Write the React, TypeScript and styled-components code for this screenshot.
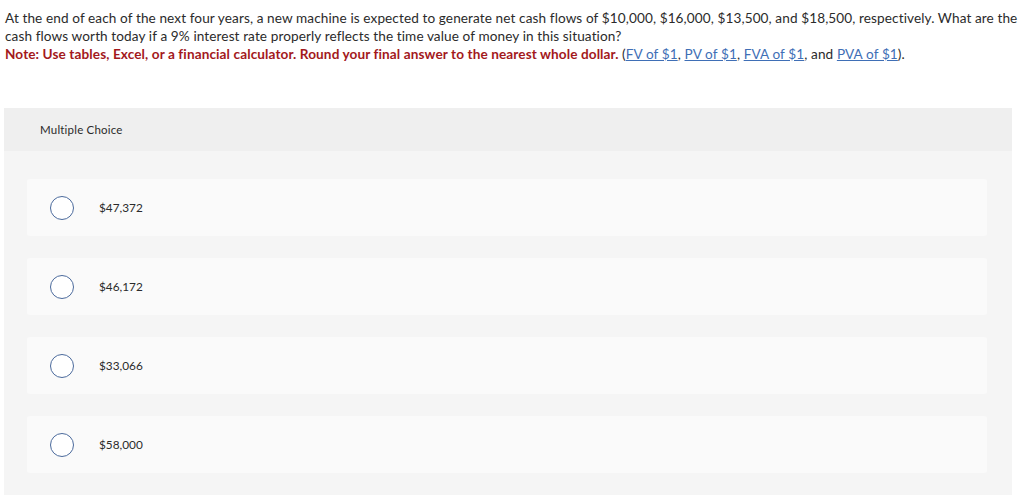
import React from 'react';
import styled, { createGlobalStyle } from 'styled-components';

const GlobalStyle = createGlobalStyle`
  body {
    margin: 0;
    background: #ffffff;
    font-family: 'Lato', 'Open Sans', sans-serif;
    color: #2b2b2b;
  }
`;

const Page = styled.div`
  padding: 9px 4px 0 4px;
`;

const Prompt = styled.p`
  margin: 0 0 0 1px;
  font-size: 13.6px;
  line-height: 18px;
  letter-spacing: 0.1px;
  color: #2b2b2b;
`;

const Note = styled.p`
  margin: 0 0 0 1px;
  font-size: 13.6px;
  line-height: 18px;
  letter-spacing: 0.1px;
  font-weight: 700;
  color: #a3191c;
`;

const Plain = styled.span`
  font-weight: 400;
  color: #2b2b2b;
`;

const RefLink = styled.a`
  font-weight: 400;
  color: #3f6fb6;
  text-decoration: underline;
`;

const Panel = styled.section`
  margin-top: 45px;
  margin-right: 8px;
  background: #f5f5f5;
  padding-bottom: 30px;
`;

const PanelHeader = styled.div`
  height: 43px;
  display: flex;
  align-items: center;
  padding-left: 36px;
  background: #efefef;
  font-size: 11.5px;
  letter-spacing: 0.2px;
  color: #2b2b2b;
`;

const Options = styled.div`
  display: flex;
  flex-direction: column;
  gap: 22px;
  padding: 28px 25px 0 23px;
`;

const OptionCard = styled.label`
  height: 57px;
  display: flex;
  align-items: center;
  gap: 25px;
  padding-left: 23px;
  background: #fafafa;
  border-radius: 3px;
  font-size: 11.8px;
  color: #2b2b2b;
`;

const Radio = styled.span`
  width: 22px;
  height: 22px;
  border-radius: 50%;
  border: 1px solid #4b6a9c;
  background: #ffffff;
  flex-shrink: 0;
`;

const choices = ['$47,372', '$46,172', '$33,066', '$58,000'];
const tables = ['FV of $1', 'PV of $1', 'FVA of $1', 'PVA of $1'];

export default function App(): React.ReactElement {
  return (
    <Page>
      <GlobalStyle />
      <Prompt>
        At the end of each of the next four years, a new machine is expected to generate net cash flows of $10,000, $16,000, $13,500, and $18,500, respectively. What are the cash flows worth today if a 9% interest rate properly reflects the time value of money in this situation?
      </Prompt>
      <Note>
        Note: Use tables, Excel, or a financial calculator. Round your final answer to the nearest whole dollar.{' '}
        <Plain>(</Plain>
        <RefLink>{tables[0]}</RefLink>
        <Plain>, </Plain>
        <RefLink>{tables[1]}</RefLink>
        <Plain>, </Plain>
        <RefLink>{tables[2]}</RefLink>
        <Plain>, and </Plain>
        <RefLink>{tables[3]}</RefLink>
        <Plain>).</Plain>
      </Note>
      <Panel>
        <PanelHeader>Multiple Choice</PanelHeader>
        <Options>
          {choices.map((c) => (
            <OptionCard key={c}>
              <Radio />
              {c}
            </OptionCard>
          ))}
        </Options>
      </Panel>
    </Page>
  );
}
